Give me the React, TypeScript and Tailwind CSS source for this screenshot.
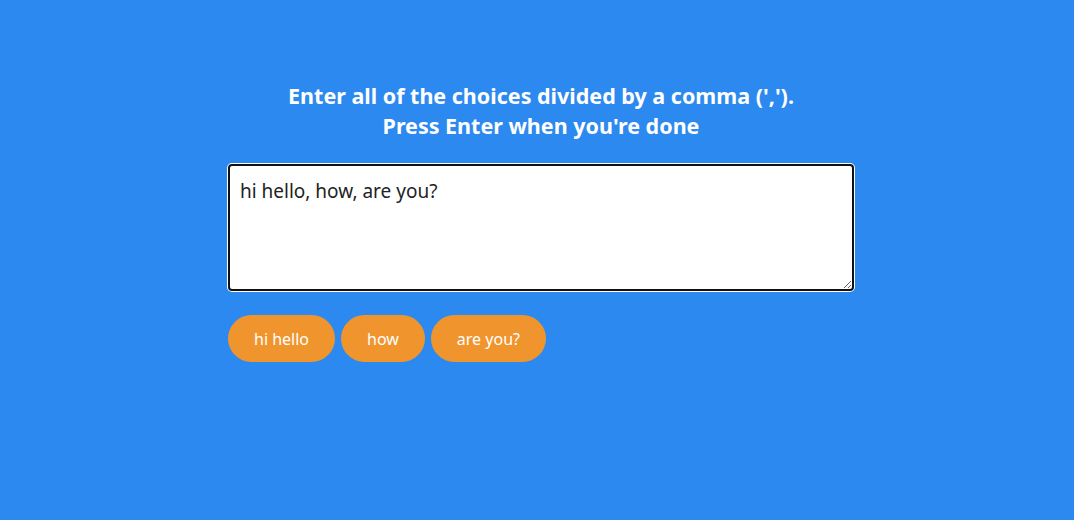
import React from "react";

const choices = ["hi hello", "how", "are you?"];

const font = { fontFamily: "'Noto Sans', Lato, sans-serif" };

export default function App() {
  return (
    <main className="min-h-[520px] w-full bg-[#2c89ef] text-white" style={font}>
      <div className="mx-auto flex w-[638px] flex-col pl-[8px] pt-[81px]">
        <h1 className="text-center text-[21.5px] font-bold leading-[30px]">
          Enter all of the choices divided by a comma (',').
          <br />
          Press Enter when you're done
        </h1>
        <div className="mt-[23px] px-[2px]">
          <textarea
            readOnly
            defaultValue="hi hello, how, are you?"
            className="block h-[127px] w-full resize rounded-[4px] border-2 border-[#111] bg-white px-[10px] py-[13px] text-[19px] leading-[24px] text-[#222] shadow-[0_0_0_1px_#fff] outline-none"
            style={font}
          />
        </div>
        <div className="mt-[24px] flex gap-[6px] px-[2px]">
          {choices.map((c) => (
            <span
              key={c}
              className="flex h-[47px] items-center rounded-full bg-[#f0952e] px-[26px] text-[16px] text-white"
            >
              {c}
            </span>
          ))}
        </div>
      </div>
    </main>
  );
}
